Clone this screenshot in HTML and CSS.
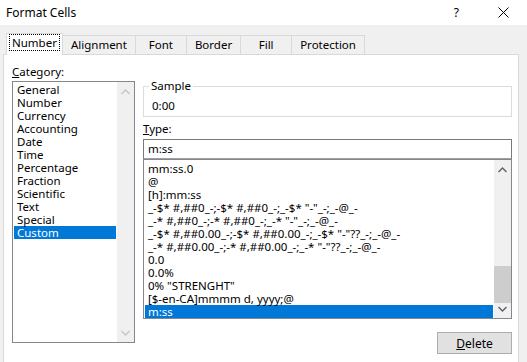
FILE: index.html
```html
<!DOCTYPE html>
<html>
<head>
    <title>Format Cells</title>
    <meta charset="UTF-8">
    <link rel="stylesheet" href="styles.css">
</head>
<body>
    <div class="titlebar">
        <span class="title">Format Cells</span>
        <span class="help">?</span>
        <svg class="close" width="11" height="11" viewBox="0 0 11 11"><path d="M0.5 0.5 L10.5 10.5 M10.5 0.5 L0.5 10.5" stroke="#000" stroke-width="1" fill="none"/></svg>
    </div>

    <div class="tabs">
        <div class="tab active"><span class="focus">Number</span></div>
        <div class="tab">Alignment</div>
        <div class="tab">Font</div>
        <div class="tab">Border</div>
        <div class="tab">Fill</div>
        <div class="tab">Protection</div>
    </div>

    <div class="panel">
        <div class="left-col">
            <div class="label"><u>C</u>ategory:</div>
            <div class="listbox category">
                <div class="items">
                    <div class="item">General</div>
                    <div class="item">Number</div>
                    <div class="item">Currency</div>
                    <div class="item">Accounting</div>
                    <div class="item">Date</div>
                    <div class="item">Time</div>
                    <div class="item">Percentage</div>
                    <div class="item">Fraction</div>
                    <div class="item">Scientific</div>
                    <div class="item">Text</div>
                    <div class="item">Special</div>
                    <div class="item selected">Custom</div>
                </div>
                <div class="scrollbar disabled">
                    <svg width="9" height="6" viewBox="0 0 9 6"><path d="M0.5 5 L4.5 1 L8.5 5" stroke="#c5c5c5" stroke-width="1.4" fill="none"/></svg>
                    <div class="track"></div>
                    <svg width="9" height="6" viewBox="0 0 9 6"><path d="M0.5 1 L4.5 5 L8.5 1" stroke="#c5c5c5" stroke-width="1.4" fill="none"/></svg>
                </div>
            </div>
        </div>

        <div class="right-col">
            <div class="sample">
                <span class="legend">Sample</span>
                <div class="sample-value">0:00</div>
            </div>

            <div class="label type-label"><u>T</u>ype:</div>
            <div class="type-input">m:ss</div>

            <div class="listbox formats">
                <div class="items">
                    <div class="item">mm:ss.0</div>
                    <div class="item">@</div>
                    <div class="item">[h]:mm:ss</div>
                    <div class="item">_-$* #,##0_-;-$* #,##0_-;_-$* "-"_-;_-@_-</div>
                    <div class="item">_-* #,##0_-;-* #,##0_-;_-* "-"_-;_-@_-</div>
                    <div class="item">_-$* #,##0.00_-;-$* #,##0.00_-;_-$* "-"??_-;_-@_-</div>
                    <div class="item">_-* #,##0.00_-;-* #,##0.00_-;_-* "-"??_-;_-@_-</div>
                    <div class="item">0.0</div>
                    <div class="item">0.0%</div>
                    <div class="item">0% "STRENGHT"</div>
                    <div class="item">[$-en-CA]mmmm d, yyyy;@</div>
                    <div class="item selected">m:ss</div>
                </div>
                <div class="scrollbar">
                    <svg width="9" height="6" viewBox="0 0 9 6"><path d="M0.5 5 L4.5 1 L8.5 5" stroke="#606060" stroke-width="1.4" fill="none"/></svg>
                    <div class="track"><div class="thumb"></div></div>
                    <svg width="9" height="6" viewBox="0 0 9 6"><path d="M0.5 1 L4.5 5 L8.5 1" stroke="#606060" stroke-width="1.4" fill="none"/></svg>
                </div>
            </div>

            <div class="buttons">
                <button type="button" class="btn"><u>D</u>elete</button>
            </div>
        </div>
    </div>
</body>
</html>
```

FILE: styles.css
```css
body {
    margin: 0;
    height: 362px;
    background-color: #f0f0f0;
    font-family: "Segoe UI", "Noto Sans", sans-serif;
    font-size: 11.5px;
    color: #000;
    overflow: hidden;
    display: flex;
    flex-direction: column;
}

.titlebar {
    height: 25px;
    background-color: #fff;
    display: flex;
    align-items: center;
    padding: 0 18px 0 6px;
}
.title {
    flex: 1;
    font-size: 12px;
}
.help {
    margin-right: 39px;
    font-size: 12px;
}

.tabs {
    display: flex;
    align-items: flex-end;
    height: 29px;
    padding-left: 6px;
}
.tab {
    height: 18px;
    line-height: 17px;
    min-width: 34px;
    padding: 0 8px;
    text-align: center;
    border: 1px solid #d9d9d9;
    border-bottom: none;
    margin-left: -1px;
    background-color: #f0f0f0;
}
.tab.active {
    height: 21px;
    min-width: 0;
    padding: 0 3px;
    margin-left: 0;
    margin-bottom: -1px;
    background-color: #fff;
    position: relative;
    z-index: 1;
}
.focus {
    display: inline-block;
    margin-top: 1px;
    padding: 0 2px;
    line-height: 15px;
    outline: 1px dotted #000;
}

.panel {
    flex: 1;
    margin: 0 8px 0 3px;
    background-color: #fff;
    border: 1px solid #d9d9d9;
    border-bottom: none;
    display: flex;
    gap: 8px;
    padding: 10px 6px 0 8px;
}

.label {
    line-height: 14px;
    margin-bottom: 2px;
}

.listbox {
    display: flex;
    border: 1px solid #828790;
    background-color: #fff;
}
.items {
    flex: 1;
    padding: 1px;
}
.item {
    line-height: 13px;
    height: 13px;
    padding-left: 3px;
    white-space: nowrap;
}
.item.selected {
    background-color: #0078d7;
    color: #fff;
}

.category {
    width: 121px;
    height: 260px;
}

.scrollbar {
    width: 17px;
    background-color: #f0f0f0;
    display: flex;
    flex-direction: column;
    align-items: center;
    padding: 7px 0 6px;
}
.track {
    flex: 1;
    width: 100%;
    display: flex;
    flex-direction: column;
    justify-content: flex-end;
    padding: 3px 0;
}
.thumb {
    height: 37px;
    background-color: #cdcdcd;
}

.right-col {
    flex: 1;
    display: flex;
    flex-direction: column;
}

.sample {
    margin-top: 21px;
    height: 31px;
    border: 1px solid #dcdcdc;
    position: relative;
    padding: 12px 0 0 8px;
    box-sizing: border-box;
}
.legend {
    position: absolute;
    top: -8px;
    left: 5px;
    padding: 0 2px;
    background-color: #fff;
    line-height: 14px;
}
.sample-value {
    line-height: 14px;
}

.type-label {
    margin-top: 5px;
}

.type-input {
    height: 18px;
    line-height: 17px;
    border: 1px solid #7a7a7a;
    border-bottom-color: #a0a0a0;
    padding-left: 4px;
    margin-top: 1px;
}

.formats {
    height: 158px;
}
.formats .items {
    padding: 2px 1px 1px;
}

.buttons {
    display: flex;
    justify-content: flex-end;
    margin-top: 13px;
}
.btn {
    width: 75px;
    height: 22px;
    font-family: inherit;
    font-size: 12px;
    background-color: #e1e1e1;
    border: 1px solid #adadad;
    padding: 0;
}
```
